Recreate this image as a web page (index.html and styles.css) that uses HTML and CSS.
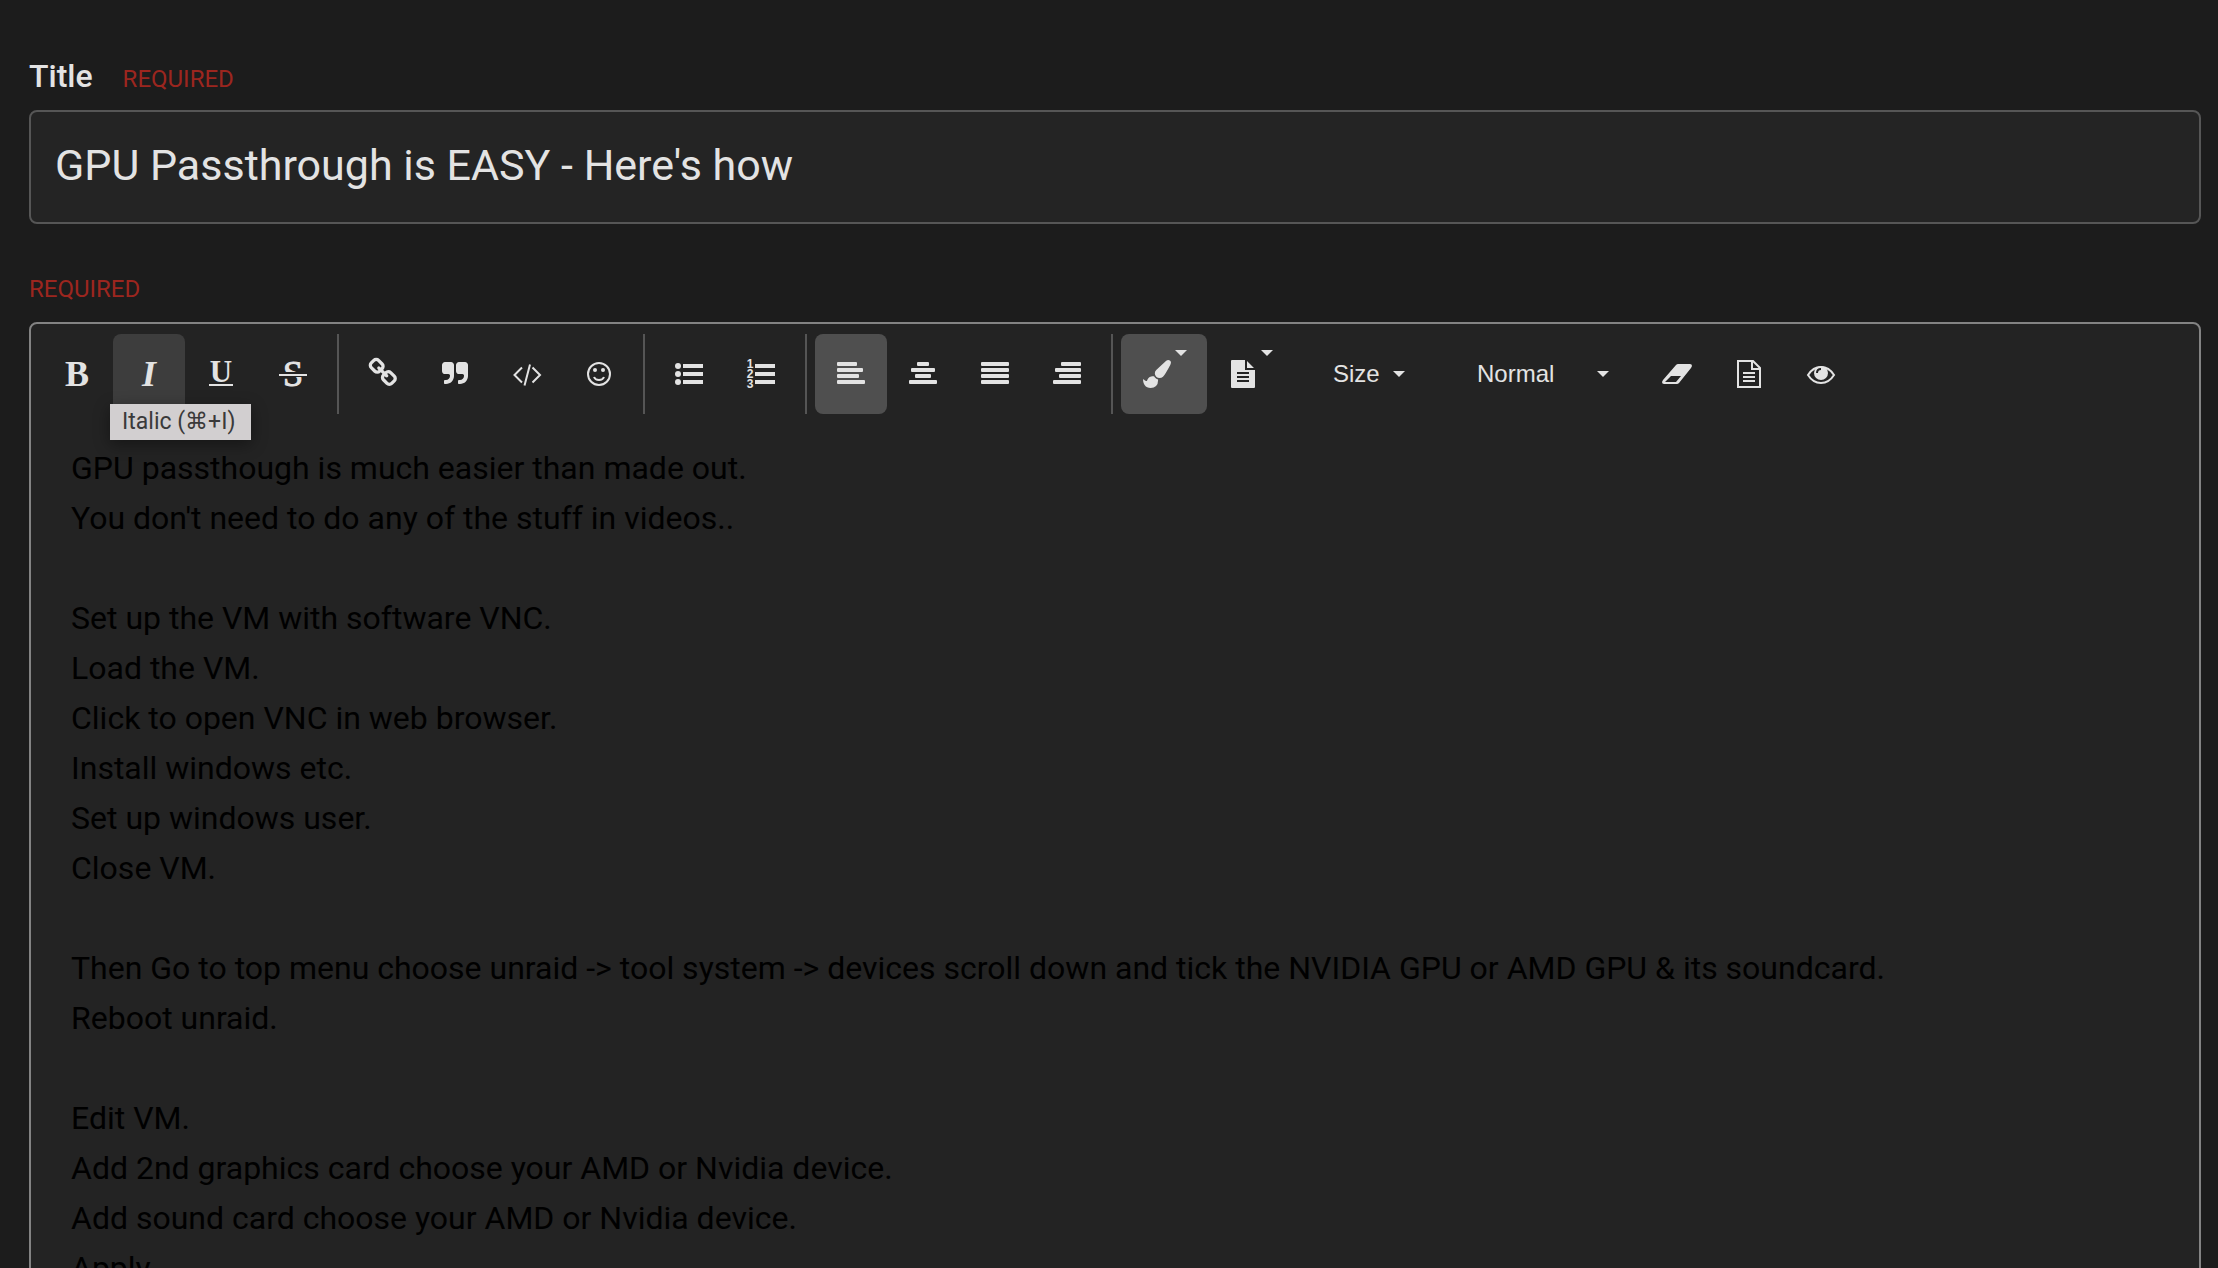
FILE: index.html
```html
<!DOCTYPE html>
<html lang="en">
<head>
    <meta charset="UTF-8">
    <meta name="viewport" content="width=device-width, initial-scale=1.0">
    <title>Create New Topic</title>
    <link rel="stylesheet" href="styles.css">
</head>
<body>

    <form class="topic-form">
        <div class="field-head">
            <label class="field-label" for="topicTitle">Title</label>
            <span class="required">REQUIRED</span>
        </div>
        <input id="topicTitle" class="title-input" type="text" value="GPU Passthrough is EASY - Here's how">

        <div class="field-head content-head">
            <span class="required">REQUIRED</span>
        </div>

        <div class="editor">
            <div class="toolbar">
                <div class="group">
                    <button type="button" class="tool" aria-label="Bold">
                        <svg class="icon" viewBox="0 0 28 28"><text class="letter bold" x="14" y="26">B</text></svg>
                    </button>
                    <button type="button" class="tool hover" aria-label="Italic">
                        <svg class="icon" viewBox="0 0 28 28"><text class="letter bold italic" x="14" y="26">I</text></svg>
                        <span class="tooltip">Italic (⌘+I)</span>
                    </button>
                    <button type="button" class="tool" aria-label="Underline">
                        <svg class="icon" viewBox="0 0 28 28"><text class="letter bold small" x="14" y="22">U</text><path d="M2 24h24v2H2z"/></svg>
                    </button>
                    <button type="button" class="tool" aria-label="Strike Through">
                        <svg class="icon" viewBox="0 0 28 28"><text class="letter strike" x="14" y="26">S</text><path class="gap" d="M4 12h20v5H4z"/><path d="M0 14h28v2H0z"/></svg>
                    </button>
                </div>
                <div class="group">
                    <button type="button" class="tool" aria-label="Link">
                        <svg class="icon" viewBox="35 144 1620 1620"><path d="M1456 1216q0-40-28-68l-208-208q-28-28-68-28-42 0-72 32 3 3 19 18.500t21.500 21.500 15 19 13 25.500 3.500 27.500q0 40-28 68t-68 28q-15 0-27.500-3.500t-25.500-13-19-15-21.500-21.500-18.500-19q-33 31-33 73 0 40 28 68l206 207q27 27 68 27 40 0 68-26l147-146q28-28 28-67zm-703-705q0-40-28-68l-206-207q-28-28-68-28-39 0-68 27l-147 146q-28 28-28 67 0 40 28 68l208 208q27 27 68 27 42 0 72-31-3-3-19-18.500t-21.500-21.500-15-19-13-25.500-3.500-27.500q0-40 28-68t68-28q15 0 27.500 3.500t25.500 13 19 15 21.500 21.500 18.500 19q33-31 33-73zm895 705q0 120-85 203l-147 146q-83 83-203 83-121 0-204-85l-206-207q-83-83-83-203 0-123 88-209l-88-88q-86 88-208 88-120 0-204-84l-208-208q-84-84-84-204t85-203l147-146q83-83 203-83 121 0 204 85l206 207q83 83 83 203 0 123-88 209l88 88q86-88 208-88 120 0 204 84l208 208q84 84 84 204z"/></svg>
                    </button>
                    <button type="button" class="tool" aria-label="Quote">
                        <svg class="icon" viewBox="0 0 1792 1792"><path id="quoteMark" d="M832 320v704q0 104-40.500 198.500t-109.500 163.500-163.500 109.500-198.500 40.500h-64q-26 0-45-19t-19-45v-128q0-26 19-45t45-19h64q106 0 181-75t75-181v-32q0-40-28-68t-68-28h-224q-80 0-136-56t-56-136v-384q0-80 56-136t136-56h384q80 0 136 56t56 136z"/><use href="#quoteMark" x="896"/></svg>
                    </button>
                    <button type="button" class="tool" aria-label="Code">
                        <svg class="icon line" viewBox="0 0 28 28"><path d="M9 7.500l-7.500 7.500L9 22.500M19.500 7.500L27 15l-7.500 7.500M17 4.500l-5.500 21"/></svg>
                    </button>
                    <button type="button" class="tool" aria-label="Emoji">
                        <svg class="icon" viewBox="0 0 28 28"><circle class="stroke" cx="14" cy="14" r="11"/><path class="stroke" d="M9 17c1.500 4 8.500 4 10 0"/><circle cx="10" cy="10" r="2"/><circle cx="18" cy="10" r="2"/></svg>
                    </button>
                </div>
                <div class="group">
                    <button type="button" class="tool" aria-label="Bulleted List">
                        <svg class="icon" viewBox="0 0 28 28"><circle cx="3" cy="6" r="3"/><circle cx="3" cy="14" r="3"/><circle cx="3" cy="22" r="3"/><path d="M8 4h20v4H8zM8 12h20v4H8zM8 20h20v4H8z"/></svg>
                    </button>
                    <button type="button" class="tool" aria-label="Numbered List">
                        <svg class="icon" viewBox="0 0 28 28"><text class="digit" x="3" y="8">1</text><text class="digit" x="3" y="18">2</text><text class="digit" x="3" y="28">3</text><path d="M8 4h20v4H8zM8 12h20v4H8zM8 20h20v4H8z"/></svg>
                    </button>
                </div>
                <div class="group">
                    <button type="button" class="tool active" aria-label="Align Left">
                        <svg class="icon" viewBox="0 0 28 28"><rect y="2" width="20" height="4" rx="1"/><rect y="8" width="26" height="4" rx="1"/><rect y="14" width="22" height="4" rx="1"/><rect y="20" width="28" height="4" rx="1"/></svg>
                    </button>
                    <button type="button" class="tool" aria-label="Center">
                        <svg class="icon" viewBox="0 0 28 28"><rect x="8" y="2" width="12" height="4" rx="1"/><rect x="2" y="8" width="24" height="4" rx="1"/><rect x="6" y="14" width="16" height="4" rx="1"/><rect y="20" width="28" height="4" rx="1"/></svg>
                    </button>
                    <button type="button" class="tool" aria-label="Justify">
                        <svg class="icon" viewBox="0 0 28 28"><rect y="2" width="28" height="4" rx="1"/><rect y="8" width="28" height="4" rx="1"/><rect y="14" width="28" height="4" rx="1"/><rect y="20" width="28" height="4" rx="1"/></svg>
                    </button>
                    <button type="button" class="tool" aria-label="Align Right">
                        <svg class="icon" viewBox="0 0 28 28"><rect x="8" y="2" width="20" height="4" rx="1"/><rect x="2" y="8" width="26" height="4" rx="1"/><rect x="6" y="14" width="22" height="4" rx="1"/><rect y="20" width="28" height="4" rx="1"/></svg>
                    </button>
                </div>
                <div class="group">
                    <button type="button" class="tool menu active" aria-label="Text Color">
                        <svg class="icon" viewBox="0 0 1792 1792"><path d="M1615 0q70 0 122.500 46.500t52.500 116.500q0 63-45 151-332 629-465 752-97 91-218 91-126 0-216.500-92.500t-90.500-219.500q0-128 92-212l638-579q59-54 130-54zm-909 1034q39 76 106.500 130t150.500 76l1 71q4 213-129.500 347t-348.500 134q-123 0-218-46.500t-152.500-127.500-86.500-183-29-220q7 5 41 30t62 44.500 59 36.500 46 17q41 0 55-37 25-66 57.500-112.500t69.500-76 88-47.500 103-25.500 125-10.500z"/></svg>
                        <span class="caret"></span>
                    </button>
                    <button type="button" class="tool menu" aria-label="Paste options">
                        <svg class="icon" viewBox="0 0 28 28"><path fill-rule="evenodd" d="M3 0h13v10h10v17a1 1 0 0 1-1 1H3a1 1 0 0 1-1-1V1a1 1 0 0 1 1-1zM8 12v2h12v-2zM8 16v2h12v-2zM8 20v2h12v-2zM18 1l7 7h-7z"/></svg>
                        <span class="caret"></span>
                    </button>
                </div>
                <div class="combo size">
                    <select aria-label="Font Size"><option>Size</option><option>10</option><option>12</option><option>14</option></select>
                    <span class="caret"></span>
                </div>
                <div class="combo format">
                    <select aria-label="Paragraph Format"><option>Normal</option><option>Heading 1</option><option>Heading 2</option></select>
                    <span class="caret"></span>
                </div>
                <div class="group">
                    <button type="button" class="tool" aria-label="Remove Format">
                        <svg class="icon wide" viewBox="0 0 30 28"><path fill-rule="evenodd" d="M16 4h12q2 0 2 2l-1 2-12 15q-1 1-2 1H2q-2 0-2-2l1-2L14 5q1-1 2-1zM9 16l-6 6h11l5-6z"/></svg>
                    </button>
                    <button type="button" class="tool" aria-label="Source">
                        <svg class="icon" viewBox="0 0 28 28"><path class="stroke" d="M3 1h15l7 7v19H3zM17 1v8h8"/><path d="M8 12h12v2H8zM8 16h12v2H8zM8 20h12v2H8z"/></svg>
                    </button>
                    <button type="button" class="tool" aria-label="Preview">
                        <svg class="icon" viewBox="0 0 28 28"><path class="stroke" d="M1 15Q6 7 14 7t13 8q-5 8-13 8T1 15z"/><circle cx="14" cy="13" r="7"/><path class="glint" d="M10 13q0-4 4-4"/></svg>
                    </button>
                </div>
            </div>

            <div class="content" contenteditable="true" role="textbox" aria-label="Content" spellcheck="false">
                <p>GPU passthough is much easier than made out.<br>
                You don't need to do any of the stuff in videos..</p>
                <p>Set up the VM with software VNC.<br>
                Load the VM.<br>
                Click to open VNC in web browser.<br>
                Install windows etc.<br>
                Set up windows user.<br>
                Close VM.</p>
                <p>Then Go to top menu choose unraid -&gt; tool system -&gt; devices scroll down and tick the NVIDIA GPU or AMD GPU &amp; its soundcard.<br>
                Reboot unraid.</p>
                <p>Edit VM.<br>
                Add 2nd graphics card choose your AMD or Nvidia device.<br>
                Add sound card choose your AMD or Nvidia device.<br>
                Apply.</p>
            </div>
        </div>
    </form>

</body>
</html>
```
FILE: styles.css
```css
* { box-sizing: border-box; }
body {
    margin: 0;
    height: 100vh;
    overflow: hidden;
    background: #1c1c1c;
    color: #e3e3e3;
    font-family: Roboto, "Liberation Sans", sans-serif;
}
.topic-form { padding: 54px 17px 0 29px; }
.field-head {
    display: flex;
    align-items: baseline;
    gap: 30px;
    height: 56px;
    line-height: 44px;
}
.content-head { margin-top: 42px; }
.content-head .required { line-height: 46px; }
.field-label {
    font-size: 32px;
    font-weight: 500;
}
.required {
    color: #9c261f;
    font-size: 24px;
}
.title-input {
    display: block;
    width: 100%;
    height: 114px;
    padding: 0 24px 4px;
    background: #242424;
    border: 2px solid #565656;
    border-radius: 8px;
    color: #e3e3e3;
    font-family: inherit;
    font-size: 43px;
}

/* editor */
.editor {
    background: #232323;
    border: 2px solid #838383;
    border-radius: 8px;
}
.toolbar {
    display: flex;
    padding: 10px;
}
.group { display: flex; }
.group + .group::before {
    content: "";
    width: 2px;
    margin: 0 8px;
    background: #555;
}
.tool {
    position: relative;
    display: flex;
    align-items: center;
    justify-content: center;
    width: 72px;
    height: 80px;
    padding: 0;
    background: none;
    border: none;
    border-radius: 8px;
    color: #e3e3e3;
    cursor: pointer;
}
.tool.hover { background: #3d3d3d; }
.tool.active { background: #4f4f4f; }
.tool.menu {
    justify-content: flex-start;
    width: 86px;
    padding-left: 22px;
}
.tool.menu .caret {
    position: absolute;
    top: 16px;
    right: 20px;
}
.icon {
    width: 28px;
    height: 28px;
    fill: currentColor;
    overflow: visible;
}
.icon.wide { width: 30px; }
.icon.line, .stroke {
    fill: none;
    stroke: currentColor;
    stroke-width: 2;
}
.letter {
    font-family: "Liberation Serif", serif;
    font-size: 36px;
    text-anchor: middle;
}
.letter.bold { font-weight: bold; }
.letter.italic { font-style: italic; }
.letter.small { font-size: 31px; }
.letter.strike { stroke: currentColor; }
.gap { fill: #232323; }
.digit {
    font-family: "Liberation Sans", sans-serif;
    font-size: 12px;
    font-weight: bold;
    text-anchor: middle;
}
.glint {
    fill: none;
    stroke: #232323;
    stroke-width: 2;
}
.caret {
    border: 6px solid transparent;
    border-top-color: #e3e3e3;
    border-bottom: none;
}
.tooltip {
    position: absolute;
    top: 70px;
    left: -3px;
    z-index: 2;
    padding: 0 16px 0 12px;
    background: #d2cfd0;
    box-shadow: 0 4px 16px rgba(0, 0, 0, 0.4);
    color: #3a3a3a;
    font-family: Roboto, "DejaVu Sans", sans-serif;
    font-size: 23px;
    line-height: 36px;
    white-space: nowrap;
}
.combo {
    position: relative;
    margin-left: 24px;
}
.combo select {
    appearance: none;
    width: 100%;
    height: 80px;
    padding: 0 16px 2px;
    background: none;
    border: none;
    color: #e3e3e3;
    font-family: "Liberation Sans", Arial, sans-serif;
    font-size: 24px;
}
.combo .caret {
    position: absolute;
    top: 37px;
    right: 20px;
    pointer-events: none;
}
.combo.size { width: 108px; }
.combo.format {
    width: 168px;
    margin: 0 12px 0 36px;
}
.content {
    padding: 19px 40px;
    color: #000;
    font-size: 32px;
    line-height: 50px;
    outline: none;
}
.content p { margin: 0 0 50px; }
```
